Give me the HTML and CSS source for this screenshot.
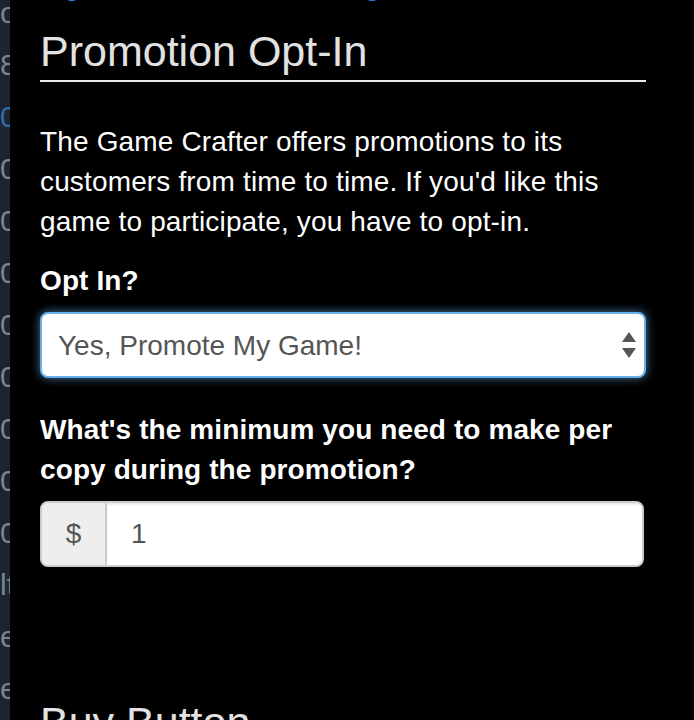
FILE: index.html
```html
<!DOCTYPE html>
<html lang="en">
<head>
<meta charset="utf-8">
<title>Promotion Opt-In</title>
<link rel="stylesheet" href="styles.css">
</head>
<body>
<div class="page">
  <aside class="behind">
    <div class="behind-rows">
      <div class="row gray">o</div>
      <div class="row gray">8</div>
      <div class="row blue">0</div>
      <div class="row gray">0</div>
      <div class="row gray">0</div>
      <div class="row gray">0</div>
      <div class="row gray">0</div>
      <div class="row gray">0</div>
      <div class="row gray">0</div>
      <div class="row gray">0</div>
      <div class="row gray">0</div>
      <div class="row gray">lt</div>
      <div class="row gray">e</div>
      <div class="row gray">e</div>
      <div class="row gray">e</div>
    </div>
  </aside>
  <main class="panel">
    <div class="toplinks"><div class="toplinks-line"><span class="tl-a">g</span><span class="tl-b">g</span></div></div>
    <h3 class="section-title">Promotion Opt-In</h3>
    <p class="intro">The Game Crafter offers promotions to its customers from time to time. If you'd like this game to participate, you have to opt-in.</p>
    <div class="form-group">
      <label class="form-label">Opt In?</label>
      <div class="select-wrap">
        <select class="form-select">
          <option>Yes, Promote My Game!</option>
          <option>No, Thanks</option>
        </select>
        <svg class="select-arrows" width="14" height="27" viewBox="0 0 14 27" aria-hidden="true">
          <polygon points="7,0 14,10 0,10" fill="#555"/>
          <polygon points="0,16 14,16 7,26" fill="#555"/>
        </svg>
      </div>
    </div>
    <div class="form-group">
      <label class="form-label">What's the minimum you need to make per copy during the promotion?</label>
      <div class="input-group">
        <span class="addon">$</span>
        <input class="form-input" type="text" value="1">
      </div>
    </div>
    <h3 class="section-title next">Buy Button</h3>
  </main>
</div>
</body>
</html>
```

FILE: styles.css
```css
html, body {
  margin: 0;
  padding: 0;
  height: 100%;
  background: #000;
  overflow: hidden;
}

body {
  font-family: "Liberation Sans", Arial, Helvetica, sans-serif;
  color: #fff;
}

.page {
  display: flex;
  min-height: 720px;
}

.behind {
  width: 10px;
  flex: 0 0 10px;
  background: #1b2430;
  overflow: hidden;
}

.behind-rows {
  margin-top: -13px;
}

.row {
  font-size: 30px;
  line-height: 52px;
  height: 52px;
  white-space: nowrap;
  padding-left: 0;
}

.row.gray { color: #7b838c; }
.row.blue { color: #2f6aab; }

.panel {
  flex: 1;
  background: #000;
  padding: 0 48px 0 30px;
}

.toplinks {
  height: 3px;
  overflow: hidden;
}

.toplinks-line {
  margin-top: -34px;
  font-size: 28px;
  line-height: 40px;
  color: #2a7ad6;
  white-space: nowrap;
}

.tl-a { margin-left: 24px; }
.tl-b { margin-left: 285px; }

.section-title {
  margin: 25px 0 0;
  padding-bottom: 6px;
  font-size: 43px;
  line-height: 46px;
  font-weight: normal;
  color: #e2e2e2;
  border-bottom: 2px solid #eaeaea;
}

.section-title.next {
  margin-top: 132px;
  border-bottom: none;
}

.intro {
  margin: 40px 0 19px;
  font-size: 28px;
  line-height: 40px;
  letter-spacing: 0.15px;
}

.form-group {
  margin-bottom: 32px;
}

.form-label {
  display: block;
  font-size: 28px;
  line-height: 40px;
  font-weight: bold;
  margin-bottom: 11px;
  letter-spacing: 0.1px;
}

.select-wrap {
  position: relative;
}

.form-select {
  display: block;
  width: 100%;
  height: 66px;
  margin: 0;
  padding: 0 40px 0 16px;
  box-sizing: border-box;
  -webkit-appearance: none;
  appearance: none;
  background: #fff;
  border: 2px solid #66afe9;
  border-radius: 8px;
  box-shadow: 0 0 10px rgba(102, 175, 233, 0.7);
  font-family: "Liberation Sans", Arial, Helvetica, sans-serif;
  font-size: 28px;
  color: #555;
  outline: none;
}

.select-arrows {
  position: absolute;
  right: 10px;
  top: 20px;
  pointer-events: none;
}

.input-group {
  display: flex;
  height: 66px;
  margin-right: 2px;
  box-sizing: border-box;
  border: 2px solid #ccc;
  border-radius: 8px;
  overflow: hidden;
  background: #fff;
}

.addon {
  flex: 0 0 65px;
  box-sizing: border-box;
  background: #eee;
  border-right: 2px solid #ccc;
  color: #555;
  font-size: 28px;
  display: flex;
  align-items: center;
  justify-content: center;
}

.form-input {
  flex: 1;
  min-width: 0;
  border: none;
  margin: 0;
  padding: 0 24px;
  font-family: "Liberation Sans", Arial, Helvetica, sans-serif;
  font-size: 28px;
  color: #555;
  background: #fff;
  box-shadow: inset 0 2px 2px rgba(0, 0, 0, 0.075);
  outline: none;
}
```
